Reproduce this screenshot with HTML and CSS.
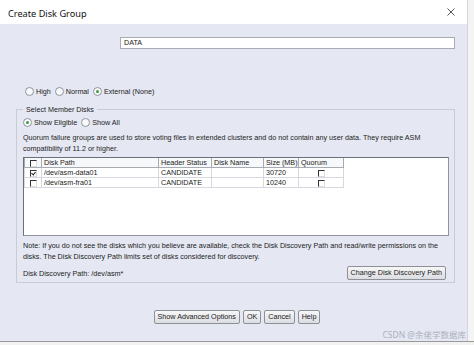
FILE: index.html
```html
<!DOCTYPE html>
<html lang="en">

<head>
    <meta charset="UTF-8">
    <title>Create Disk Group</title>
    <link rel="stylesheet" href="styles.css">
</head>

<body>
    <div class="page">
        <div class="dialog">
            <div class="titlebar">
                <span class="title">Create Disk Group</span>
                <svg class="close" width="8" height="8" viewBox="0 0 8 8">
                    <path d="M0.5 0.5 L7.5 7.5 M7.5 0.5 L0.5 7.5" stroke="#555" stroke-width="1" fill="none" />
                </svg>
            </div>

            <div class="content">
                <div class="name-row">
                    <div class="textbox">DATA</div>
                </div>

                <div class="radio-row redundancy">
                    <span class="radio"></span><span class="lbl">High</span>
                    <span class="radio"></span><span class="lbl">Normal</span>
                    <span class="radio on"></span><span class="lbl">External (None)</span>
                </div>

                <div class="members">
                    <div class="legend">Select Member Disks</div>

                    <div class="radio-row">
                        <span class="radio on"></span><span class="lbl">Show Eligible</span>
                        <span class="radio"></span><span class="lbl">Show All</span>
                    </div>

                    <p class="info">Quorum failure groups are used to store voting files in extended clusters and do not contain any user data. They require ASM compatibility of 11.2 or higher.</p>

                    <div class="table-box">
                        <table class="disks">
                            <tr class="head">
                                <td class="c-check"><span class="check"></span></td>
                                <td class="c-path">Disk Path</td>
                                <td class="c-status">Header Status</td>
                                <td class="c-name">Disk Name</td>
                                <td class="c-size">Size (MB)</td>
                                <td class="c-quorum">Quorum</td>
                            </tr>
                            <tr>
                                <td class="c-check"><span class="check checked"></span></td>
                                <td>/dev/asm-data01</td>
                                <td>CANDIDATE</td>
                                <td></td>
                                <td>30720</td>
                                <td class="c-quorum"><span class="check"></span></td>
                            </tr>
                            <tr>
                                <td class="c-check"><span class="check"></span></td>
                                <td>/dev/asm-fra01</td>
                                <td>CANDIDATE</td>
                                <td></td>
                                <td>10240</td>
                                <td class="c-quorum"><span class="check"></span></td>
                            </tr>
                        </table>
                    </div>

                    <p class="note">Note: If you do not see the disks which you believe are available, check the Disk Discovery Path and read/write permissions on the disks. The Disk Discovery Path limits set of disks considered for discovery.</p>

                    <div class="discovery">
                        <span>Disk Discovery Path: /dev/asm*</span>
                        <button class="btn">Change Disk Discovery Path</button>
                    </div>
                </div>

                <div class="actions">
                    <button class="btn">Show Advanced Options</button>
                    <button class="btn">OK</button>
                    <button class="btn">Cancel</button>
                    <button class="btn">Help</button>
                </div>
            </div>
        </div>
        <div class="edge"></div>
    </div>
    <div class="watermark">CSDN @余佬学数据库</div>
</body>

</html>
```

FILE: styles.css
```css
/* General Styles */
body {
    margin: 0;
    padding: 0;
    background-color: #f2f2f2;
    font-family: "Liberation Sans", Arial, sans-serif;
    font-size: 7.2px;
    color: #222;
    position: relative;
    width: 474px;
    height: 345px;
    overflow: hidden;
}

.page {
    display: flex;
    height: 341px;
    border-bottom: 1px solid #9a9a9a;
}

.dialog {
    width: 467px;
    display: flex;
    flex-direction: column;
    border-right: 1px solid #d4d6dc;
}

.edge {
    flex: 1;
    background-color: #f4f4f4;
}

/* Title bar */
.titlebar {
    height: 24px;
    background-color: white;
    display: flex;
    align-items: center;
    justify-content: space-between;
    padding: 0 12px 0 8px;
}

.title {
    font-family: "Noto Sans", sans-serif;
    font-size: 9.2px;
    color: #111;
    padding-top: 2px;
}

.content {
    flex: 1;
    background-color: #e5e8f3;
    padding: 13px 12px 0 16px;
}

/* Name field */
.name-row {
    padding-left: 104px;
}

.textbox {
    height: 10px;
    background-color: white;
    border: 1px solid #a9acb4;
    padding: 0 3px;
    line-height: 10px;
}

/* Radios */
.radio-row {
    display: flex;
    align-items: center;
    height: 10px;
}

.redundancy {
    margin-top: 37px;
    padding-left: 9px;
}

.radio {
    width: 7px;
    height: 7px;
    border: 1px solid #8e939b;
    border-radius: 50%;
    background-color: #f8f9fb;
    margin-right: 2px;
    position: relative;
}

.radio.on::after {
    content: "";
    position: absolute;
    left: 2px;
    top: 2px;
    width: 3px;
    height: 3px;
    border-radius: 50%;
    background-color: #3f9a3a;
}

.lbl {
    margin-right: 4px;
}

/* Member disks */
.members {
    margin-top: 13px;
    border: 1px solid #c9ccd3;
    height: 172px;
    padding: 0 6px 0 6px;
    position: relative;
}

.legend {
    position: absolute;
    top: -5px;
    left: 6px;
    padding: 0 3px;
    background-color: #e5e8f3;
    line-height: 10px;
}

.members .radio-row {
    margin-top: 7px;
}

.info {
    margin: 5px 0 0;
    line-height: 11px;
}

.table-box {
    margin-top: 3px;
    height: 77px;
    width: 424px;
    background-color: white;
    border: 1px solid #8f949c;
    border-left-color: #6c7078;
    border-top-color: #6c7078;
}

.disks {
    border-collapse: collapse;
    table-layout: fixed;
    width: 319px;
    font-size: 7.2px;
}

.disks td {
    height: 9px;
    padding: 0 2px;
    border: 1px solid #d6d9df;
    line-height: 9px;
    white-space: nowrap;
    overflow: hidden;
}

.disks .head td {
    background-color: #f7f8fa;
    border: 1px solid #a8abb2;
    border-top: none;
    text-align: left;
}

.disks .head td.c-check {
    text-align: center;
}

.c-check {
    width: 12px;
    text-align: center;
}

.c-path {
    width: 112px;
}

.c-status {
    width: 48px;
}

.c-name {
    width: 47px;
}

.c-size {
    width: 30px;
}

.c-quorum {
    width: 40px;
    text-align: center;
}

.check {
    display: inline-block;
    width: 5px;
    height: 5px;
    border-top: 1px solid #333;
    border-left: 1px solid #333;
    border-right: 1px solid #ddd;
    border-bottom: 1px solid #ddd;
    background-color: white;
    vertical-align: middle;
    position: relative;
}

.check.checked::after {
    content: "";
    position: absolute;
    left: 1px;
    top: 0px;
    width: 2px;
    height: 3px;
    border-right: 1px solid #222;
    border-bottom: 1px solid #222;
    transform: rotate(40deg);
}

.note {
    margin: 4px 0 0;
    line-height: 11px;
}

.discovery {
    display: flex;
    align-items: center;
    justify-content: space-between;
    margin-top: 4px;
    padding-right: 2px;
}

/* Buttons */
.btn {
    font-family: "Liberation Sans", Arial, sans-serif;
    font-size: 7.2px;
    color: #222;
    height: 14px;
    padding: 0 3px;
    background: linear-gradient(#f7f7f8, #dcdde2);
    border: 1px solid #8d9097;
    border-radius: 2px;
    line-height: 12px;
}

.actions {
    display: flex;
    justify-content: center;
    gap: 3px;
    margin-top: 27px;
    padding-left: 3px;
}

.watermark {
    position: absolute;
    right: 8px;
    bottom: 5px;
    font-family: "Noto Sans", "Noto Sans CJK SC", sans-serif;
    font-size: 8.5px;
    color: rgba(150, 155, 170, 0.75);
}
```
